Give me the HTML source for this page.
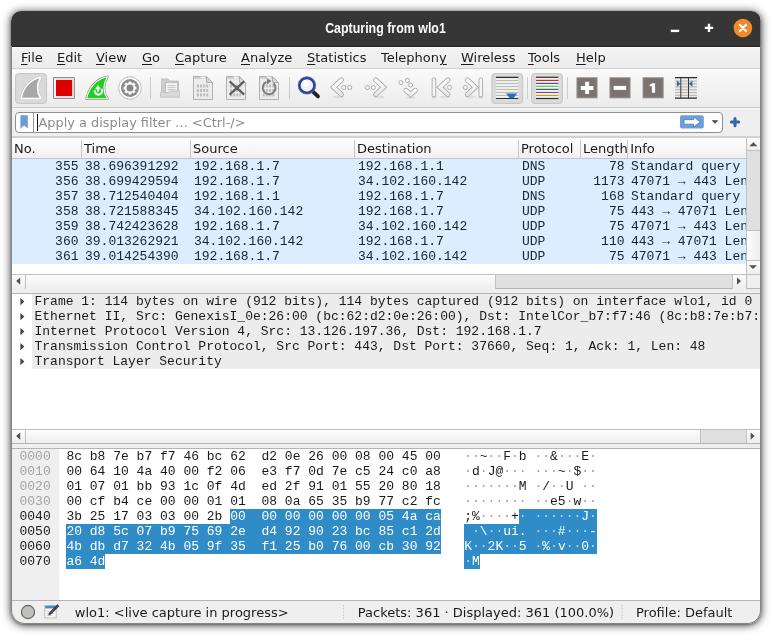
<!DOCTYPE html>
<html><head><meta charset="utf-8"><title>Capturing from wlo1</title>
<style>
*{box-sizing:border-box;margin:0;padding:0}
html,body{width:773px;height:636px;background:#fff;overflow:hidden}
body{position:relative;font-family:"DejaVu Sans","Liberation Sans",sans-serif;font-size:13px;color:#1a1a1a}
.a{position:absolute}
#shadow{position:absolute;left:11px;top:11px;width:750px;height:613px;border-radius:10px 10px 14px 14px;box-shadow:0 1px 9px 1px rgba(0,0,0,.6),0 1px 3px 0 rgba(0,0,0,.35)}
#win{position:absolute;left:11px;top:11px;width:750px;height:613px;border-radius:10px 10px 14px 14px;background:#efefef;overflow:hidden}
#edge{position:absolute;left:11px;top:46px;width:750px;height:578px;box-shadow:inset 1px 0 0 #858585,inset -1px 0 0 #858585,inset 0 -1px 0 #858585;border-radius:0 0 14px 14px;pointer-events:none}
#page{position:absolute;left:-11px;top:-11px;width:773px;height:636px;will-change:transform}
#title{position:absolute;left:11px;top:11px;width:750px;height:36px;background:#363636;border-bottom:1px solid #232323}
#title .t{position:absolute;left:0;width:749px;top:8px;height:18px;line-height:18px;text-align:center;color:#fafafa;font-family:"Liberation Sans","DejaVu Sans",sans-serif;font-weight:bold;font-size:14px;transform:scaleX(0.887);transform-origin:374.5px 0}
#menu{position:absolute;left:11px;top:47px;width:750px;height:22px;background:linear-gradient(#f3f3f3,#ececec);border-top:1px solid #fbfbfb;border-bottom:1px solid #d0d0d0}
#menu span{position:absolute;top:2px;white-space:nowrap;line-height:16px}
u{text-decoration:underline;text-underline-offset:1.5px;text-decoration-thickness:1px}
.mono{font-family:"Liberation Mono","DejaVu Sans Mono",monospace;font-size:13px;white-space:pre;line-height:15px}
.line{position:absolute;background:#d0d0d0}
.tbtn{position:absolute;background:#dadada;border:1px solid #c2c2c2;border-radius:3px}
.pane{position:absolute;background:#fff;border:1px solid #b4b4b4}
.row{position:absolute;left:12px;width:734px;overflow:hidden;height:15px;background:#daeeff;color:#12272e}
.row span{position:absolute;top:0}
.hd{position:absolute;top:139px;height:20px;line-height:20px;white-space:nowrap;color:#1a1a1a}
.sep{position:absolute;top:140px;width:1px;height:18px;background:#c8c8c8}
.sb{position:absolute;background:#e0e0e0}
.sbh{position:absolute;background:linear-gradient(#fcfcfc,#eeeeee);border:1px solid #c0c0c0}
.sbv{background:linear-gradient(90deg,#fcfcfc,#eeeeee)}
.drow{position:absolute;left:32px;width:728px;overflow:hidden;height:15px;background:#ececec;color:#1a1a1a}
.drow span{position:absolute;left:2.5px;top:0}
.hx{position:absolute;height:15px;color:#1a1a1a}
.sel{position:absolute;height:15px;background:#308cc6}
.w{color:#fff}
.hx i{font-style:normal;color:#a0a0a0}
.w i,.hx.w i{color:#b9d9ee}
.g{color:#a3a3a3}
</style></head><body>
<div id="shadow"></div>
<div id="win"><div id="page">
<div id="title"><div class="t">Capturing from wlo1</div></div>
<div class="a" style="left:760px;top:11px;width:1px;height:36px;background:#7a7a7a"></div>
<div id="menu"><span style="left:10px"><u>F</u>ile</span><span style="left:46px"><u>E</u>dit</span><span style="left:85px"><u>V</u>iew</span><span style="left:131px"><u>G</u>o</span><span style="left:164px"><u>C</u>apture</span><span style="left:230px"><u>A</u>nalyze</span><span style="left:296px"><u>S</u>tatistics</span><span style="left:370px">Telephon<u>y</u></span><span style="left:450px"><u>W</u>ireless</span><span style="left:517px"><u>T</u>ools</span><span style="left:565px"><u>H</u>elp</span></div>
<div class="a" style="left:11px;top:69px;width:750px;height:38px;background:linear-gradient(#fafafa,#ebebeb)"></div><div class="line" style="left:11px;top:107px;width:750px;height:1px;background:#c8c8c8"></div><div class="line" style="left:11px;top:108px;width:750px;height:1px;background:#f9f9f9"></div>
<div class="line" style="left:150px;top:77px;width:1px;height:22px;background:#cdcdcd"></div><div class="line" style="left:289px;top:77px;width:1px;height:22px;background:#cdcdcd"></div><div class="line" style="left:527px;top:77px;width:1px;height:22px;background:#cdcdcd"></div><div class="line" style="left:567px;top:77px;width:1px;height:22px;background:#cdcdcd"></div>

<svg class="a" style="left:0;top:0" width="773" height="636" viewBox="0 0 773 636">
<defs>
<linearGradient id="chev" x1="0" y1="0" x2="0" y2="1"><stop offset="0" stop-color="#ffffff"/><stop offset="1" stop-color="#e6e6e6"/></linearGradient>
<g id="doc"><path d="M0.5,0.5 H13.5 L19.5,6.5 V23.5 H0.5 Z" fill="#ececec" stroke="#b0b0b0"/><path d="M1,1 H7.4 a3,2.6 0 0 0 5.2,0 H13.3 V2.8 H1 Z" fill="#cbcbcb"/><path d="M7.2,0.6 a2.9,2.9 0 0 0 5.6,0 Z" fill="#f4f4f4"/><path d="M13.5,0.5 V6.5 H19.5 Z" fill="#d6d6d6" stroke="#b0b0b0" stroke-linejoin="round"/></g>
<g id="bits" fill="none" stroke="#bcbcbc" stroke-dasharray="2 1.1"><path d="M3.9,10 H16 M3.9,14.5 H16 M3.9,19 H16" stroke-width="3"/></g>
</defs>
<!-- checked button backgrounds -->
<g fill="#dadada" stroke="#c4c4c4" stroke-width="1">
<rect x="15.6" y="73.6" width="30.8" height="29.8" rx="3"/>
<rect x="491.9" y="73.6" width="30.8" height="29.8" rx="3"/>
<rect x="531.6" y="73.6" width="30.8" height="29.8" rx="3"/>
</g>
<!-- fin (disabled, checked) -->
<path d="M40.8,77.2 C30.4,79.4 23.2,87.4 21,98.6 L41,98.6 C36.6,92.4 36.4,85 40.8,77.2 Z" fill="#a8a8a8" stroke="#bdbdbd" stroke-width="2.6" stroke-linejoin="round"/>
<path d="M40.8,77.2 C30.4,79.4 23.2,87.4 21,98.6 L41,98.6 C36.6,92.4 36.4,85 40.8,77.2 Z" fill="#a8a8a8" stroke="#ffffff" stroke-width="1.6" stroke-linejoin="round"/>
<!-- stop -->
<rect x="53.5" y="77.6" width="20.8" height="20.8" fill="#f0f0f0" stroke="#848484"/>
<rect x="56" y="79.9" width="16.2" height="16.2" fill="#dd0000"/>
<!-- restart fin -->
<path d="M107.4,76.8 C96.4,79 88.8,87.4 86.6,98.8 L107.6,98.8 C103,92.4 102.8,84.6 107.4,76.8 Z" fill="#1fd01f" stroke="#8e8e8e" stroke-width="2.4" stroke-linejoin="round"/>
<path d="M107.4,76.8 C96.4,79 88.8,87.4 86.6,98.8 L107.6,98.8 C103,92.4 102.8,84.6 107.4,76.8 Z" fill="#1ecf1e" stroke="#f2fff2" stroke-width="1.1" stroke-linejoin="round"/>
<path d="M101.6,89 A3.7,3.7 0 1 1 94.8,90.2" fill="none" stroke="#fff" stroke-width="2.1"/>
<path d="M98,85 L101,89.2 L95,89.2 Z" fill="#fff"/>
<path d="M98,88 V92" stroke="#fff" stroke-width="1.7"/>
<!-- gear -->
<circle cx="130" cy="88" r="11.3" fill="#ffffff" stroke="#bcbcbc" stroke-width="1"/>
<circle cx="130" cy="88" r="9" fill="#8b8b8b"/>
<g transform="translate(130 88)" fill="#ffffff">
<circle r="5"/>
<g id="teeth"><rect x="-1.5" y="-6.5" width="3" height="13" rx="0.5"/><rect x="-6.5" y="-1.5" width="13" height="3" rx="0.5"/></g>
<use href="#teeth" transform="rotate(45)"/>
<circle r="3.5" fill="#878787"/>
</g>
<!-- open folder (disabled) -->
<path d="M161.5,79 H168 L169.5,81 H178.5 V96.5 H161.5 Z" fill="#cdcdcd" stroke="#c2c2c2"/>
<rect x="165.5" y="82.5" width="12" height="10" fill="#f2f2f2" stroke="#bdbdbd"/>
<path d="M167.5,85.5 H175.5 M167.5,87.5 H175.5 M167.5,89.5 H175.5" stroke="#c4c4c4" stroke-width="0.9"/>
<path d="M160.5,92.5 H168 L169.5,91 H179.5 V97.2 H160.5 Z" fill="#d9d9d9" stroke="#c6c6c6"/>
<!-- save doc -->
<g transform="translate(193 76)"><use href="#doc"/><use href="#bits"/></g>
<!-- close doc -->
<g transform="translate(226 76)"><use href="#doc"/><use href="#bits"/><path d="M3.6,5.4 L18.2,18.6 M18.2,5.4 L3.6,18.6" stroke="#5c5c5c" stroke-width="2.1" fill="none"/></g>
<!-- reload doc -->
<g transform="translate(259 76)"><use href="#doc"/><use href="#bits"/><path d="M7.4,6 A6.4,6.4 0 1 0 14.6,7.2" stroke="#7d7d7d" stroke-width="2" fill="none"/><path d="M7.8,2.2 L12.6,5 L8,8.6 Z" fill="#7d7d7d"/></g>
<!-- find -->
<path d="M313,91.6 L318,96.4" stroke="#222" stroke-width="3.8" stroke-linecap="round"/>
<circle cx="306.9" cy="85.4" r="7.6" fill="#eef1f6" stroke="#2c3f9e" stroke-width="2.7"/>
<circle cx="306.9" cy="85.4" r="8.7" fill="none" stroke="#5b78c8" stroke-width="0.8" opacity=".8"/>
<circle cx="305.6" cy="83.6" r="3.4" fill="#ffffff" opacity=".8"/>
<g opacity=".2" fill="#9a9a9a"><ellipse cx="338" cy="97" rx="5" ry="1.2"/><ellipse cx="379.5" cy="97" rx="5" ry="1.2"/><ellipse cx="410.6" cy="97.6" rx="5" ry="1.2"/><ellipse cx="434" cy="97.6" rx="3" ry="1.1"/><ellipse cx="445" cy="97" rx="5" ry="1.2"/><ellipse cx="471" cy="97" rx="5" ry="1.2"/><ellipse cx="480.8" cy="97.6" rx="3" ry="1.1"/></g>
<!-- back -->
<path d="M341.5,79.9 L333.6,87.2 L341.5,94.5" fill="none" stroke="#a3a3a3" stroke-width="5" stroke-linecap="round" stroke-linejoin="miter"/><path d="M341.5,79.9 L333.6,87.2 L341.5,94.5" fill="none" stroke="url(#chev)" stroke-width="3.4" stroke-linecap="round" stroke-linejoin="miter"/>
<circle cx="343.8" cy="87.5" r="2.05" fill="#fbfbfb" stroke="#a6a6a6" stroke-width="0.9"/>
<circle cx="349.7" cy="87.5" r="2.05" fill="#fbfbfb" stroke="#a6a6a6" stroke-width="0.9"/>
<!-- forward -->
<path d="M375.7,79.9 L383.6,87.2 L375.7,94.5" fill="none" stroke="#a3a3a3" stroke-width="5" stroke-linecap="round" stroke-linejoin="miter"/><path d="M375.7,79.9 L383.6,87.2 L375.7,94.5" fill="none" stroke="url(#chev)" stroke-width="3.4" stroke-linecap="round" stroke-linejoin="miter"/>
<circle cx="367.4" cy="87.5" r="2.05" fill="#fbfbfb" stroke="#a6a6a6" stroke-width="0.9"/>
<circle cx="373.3" cy="87.5" r="2.05" fill="#fbfbfb" stroke="#a6a6a6" stroke-width="0.9"/>
<!-- goto -->
<path d="M405.9,90.4 L410.6,94.6 L415.3,90.4" fill="none" stroke="#a3a3a3" stroke-width="5" stroke-linecap="round" stroke-linejoin="miter"/><path d="M405.9,90.4 L410.6,94.6 L415.3,90.4" fill="none" stroke="url(#chev)" stroke-width="3.4" stroke-linecap="round" stroke-linejoin="miter"/>
<circle cx="400.9" cy="82.6" r="2.05" fill="#fbfbfb" stroke="#a6a6a6" stroke-width="0.9"/>
<circle cx="407.5" cy="80.4" r="2.05" fill="#fbfbfb" stroke="#a6a6a6" stroke-width="0.9"/>
<circle cx="410.6" cy="85" r="2.05" fill="#fbfbfb" stroke="#a6a6a6" stroke-width="0.9"/>
<!-- first -->
<path d="M433.9,79.6 V95.2" stroke="#a3a3a3" stroke-width="4.4" stroke-linecap="round"/><path d="M433.9,79.6 V95.2" stroke="#f6f6f6" stroke-width="2.8" stroke-linecap="round"/>
<path d="M447.9,79.9 L440,87.2 L447.9,94.5" fill="none" stroke="#a3a3a3" stroke-width="5" stroke-linecap="round" stroke-linejoin="miter"/><path d="M447.9,79.9 L440,87.2 L447.9,94.5" fill="none" stroke="url(#chev)" stroke-width="3.4" stroke-linecap="round" stroke-linejoin="miter"/>
<circle cx="449.6" cy="87.5" r="2.05" fill="#fbfbfb" stroke="#a6a6a6" stroke-width="0.9"/>
<!-- last -->
<path d="M480.8,79.6 V95.2" stroke="#a3a3a3" stroke-width="4.4" stroke-linecap="round"/><path d="M480.8,79.6 V95.2" stroke="#f6f6f6" stroke-width="2.8" stroke-linecap="round"/>
<path d="M467.4,79.9 L475.3,87.2 L467.4,94.5" fill="none" stroke="#a3a3a3" stroke-width="5" stroke-linecap="round" stroke-linejoin="miter"/><path d="M467.4,79.9 L475.3,87.2 L467.4,94.5" fill="none" stroke="url(#chev)" stroke-width="3.4" stroke-linecap="round" stroke-linejoin="miter"/>
<circle cx="465.3" cy="87.5" r="2.05" fill="#fbfbfb" stroke="#a6a6a6" stroke-width="0.9"/>
<!-- autoscroll -->
<g>
<rect x="496" y="77" width="22.4" height="22" fill="#efefea"/>
<path d="M496,80.5 H518.4 M496,83.5 H518.4 M496,86.5 H518.4 M496,89.5 H518.4 M496,92.5 H518.4 M496,95.5 H518.4" stroke="#bcbcb6" stroke-width="1"/>
<path d="M496,77.3 H518.4 M496,98.5 H518.4" stroke="#2b2b2b" stroke-width="1.2"/>
<path d="M506,93.6 H517.2 L513.4,98.2 H509.8 Z" fill="#2f6cb8"/>
</g>
<!-- colorize -->
<g stroke-width="1.2">
<rect x="536" y="77" width="22.4" height="22" fill="#f4f4f0" stroke="none"/>
<path d="M536,77.3 H558.4" stroke="#2b2b2b"/>
<path d="M536,80.4 H558.4" stroke="#e02020"/>
<path d="M536,83.4 H558.4" stroke="#2a5db0"/>
<path d="M536,86.3 H558.4" stroke="#6cc820"/>
<path d="M536,89.4 H558.4" stroke="#2a5db0"/>
<path d="M536,92.5 H558.4" stroke="#74508c"/>
<path d="M536,95.5 H558.4" stroke="#c8a010"/>
<path d="M536,98.5 H558.4" stroke="#2b2b2b"/>
</g>
<!-- zoom in / out / 1:1 -->
<g>
<rect x="576.9" y="77.7" width="20.2" height="20.2" fill="#7a736f" stroke="#9d9794" stroke-width="0.9"/>
<path d="M580.8,87.9 H593.4 M587.1,81.8 V93.9" stroke="#fff" stroke-width="4"/>
<rect x="609.9" y="77.7" width="20.2" height="20.2" fill="#7a736f" stroke="#9d9794" stroke-width="0.9"/>
<path d="M613.6,87.9 H626.2" stroke="#fff" stroke-width="4"/>
<rect x="643" y="77.7" width="20.2" height="20.2" fill="#7a736f" stroke="#9d9794" stroke-width="0.9"/>
<path d="M649.8,86.4 V84.6 L652.2,83.3 H655.1 V92.8 H651.9 V86 Z" fill="#fff"/>
</g>
<!-- resize columns -->
<g>
<rect x="675" y="77.5" width="22" height="21" fill="#ecece6"/>
<path d="M675,81.1 H697 M675,83.9 H697 M675,86.9 H697 M675,89.7 H697 M675,92.5 H697 M675,95.3 H697" stroke="#b6b6ae" stroke-width="1"/>
<path d="M675,77.6 H697 M675,98.2 H697" stroke="#2b2b2b" stroke-width="1.2"/>
<path d="M680.8,77.5 V98.5 M688.5,77.5 V98.5" stroke="#3a3a3a" stroke-width="1"/>
<path d="M676.9,80.6 L680.4,83.8 L676.9,87 Z M692.4,80.6 L688.9,83.8 L692.4,87 Z" fill="#2f6cb8"/>
</g>
</svg>

<div class="a" style="left:15px;top:112px;width:708px;height:21px;background:#fff;border:1px solid #8f8f8f;border-radius:4px"></div><div class="a" style="left:33px;top:113px;width:1px;height:19px;background:#9a9a9a"></div><div class="a" style="left:37px;top:114px;width:1px;height:17px;background:#111"></div><div class="a" style="left:38.5px;top:112px;height:21px;line-height:21px;color:#8c8c8c;white-space:nowrap;font-size:12.9px">Apply a display filter … &lt;Ctrl-/&gt;</div>
<svg class="a" style="left:0;top:0" width="773" height="636" viewBox="0 0 773 636">
<path d="M20.4,115.2 H27.8 V128.6 L24.1,125.4 L20.4,128.6 Z" fill="#6c9bd2"/>
<rect x="680" y="115.2" width="23.8" height="13.4" rx="2" fill="#6f9fd8"/>
<path d="M684,119.6 H693.6 V116.8 L700.4,121.9 L693.6,127 V124.2 H684 Z" fill="#fff" stroke="#4a7fc0" stroke-width="0.9" stroke-linejoin="round"/>
<path d="M711.6,120.2 H718.4 L715,123.8 Z" fill="#4a4a4a"/>
<path d="M735,118.4 V125.8 M731.3,122.1 H738.7" stroke="#3465a4" stroke-width="3" stroke-linecap="round"/>
</svg>

<div class="pane" style="left:11px;top:136px;width:749px;height:153px;border-left:0;border-right:0;border-top:2px solid #d2d2d2"></div><div class="a" style="left:12px;top:138px;width:735px;height:21px;background:linear-gradient(#ffffff,#f0f0f0);border-bottom:1px solid #c4c4c4"></div><div class="hd" style="left:14px">No.</div><div class="hd" style="left:84px">Time</div><div class="hd" style="left:193px">Source</div><div class="hd" style="left:357px">Destination</div><div class="hd" style="left:521px">Protocol</div><div class="hd" style="left:583px">Length</div><div class="hd" style="left:630.2px">Info</div><div class="sep" style="left:81px"></div><div class="sep" style="left:190px"></div><div class="sep" style="left:354px"></div><div class="sep" style="left:518px"></div><div class="sep" style="left:580px"></div><div class="sep" style="left:627px"></div>
<div class="row mono" style="top:159px"><span style="right:667.5px">355</span><span style="left:73px">38.696391292</span><span style="left:182px">192.168.1.7</span><span style="left:346px">192.168.1.1</span><span style="left:510px">DNS</span><span style="right:121.5px">78</span><span style="left:619px">Standard query 0x</span></div>
<div class="row mono" style="top:174px"><span style="right:667.5px">356</span><span style="left:73px">38.699429594</span><span style="left:182px">192.168.1.7</span><span style="left:346px">34.102.160.142</span><span style="left:510px">UDP</span><span style="right:121.5px">1173</span><span style="left:619px">47071 → 443 Len=</span></div>
<div class="row mono" style="top:189px"><span style="right:667.5px">357</span><span style="left:73px">38.712540404</span><span style="left:182px">192.168.1.1</span><span style="left:346px">192.168.1.7</span><span style="left:510px">DNS</span><span style="right:121.5px">168</span><span style="left:619px">Standard query re</span></div>
<div class="row mono" style="top:204px"><span style="right:667.5px">358</span><span style="left:73px">38.721588345</span><span style="left:182px">34.102.160.142</span><span style="left:346px">192.168.1.7</span><span style="left:510px">UDP</span><span style="right:121.5px">75</span><span style="left:619px">443 → 47071 Len=</span></div>
<div class="row mono" style="top:219px"><span style="right:667.5px">359</span><span style="left:73px">38.742423628</span><span style="left:182px">192.168.1.7</span><span style="left:346px">34.102.160.142</span><span style="left:510px">UDP</span><span style="right:121.5px">75</span><span style="left:619px">47071 → 443 Len=</span></div>
<div class="row mono" style="top:234px"><span style="right:667.5px">360</span><span style="left:73px">39.013262921</span><span style="left:182px">34.102.160.142</span><span style="left:346px">192.168.1.7</span><span style="left:510px">UDP</span><span style="right:121.5px">110</span><span style="left:619px">443 → 47071 Len=</span></div>
<div class="row mono" style="top:249px"><span style="right:667.5px">361</span><span style="left:73px">39.014254390</span><span style="left:182px">192.168.1.7</span><span style="left:346px">34.102.160.142</span><span style="left:510px">UDP</span><span style="right:121.5px">75</span><span style="left:619px">47071 → 443 Len=</span></div>
<div class="sb" style="left:746px;top:138px;width:14px;height:137px;border-left:1px solid #c2c2c2"></div><div class="sbh" style="left:746px;top:138px;width:14px;height:13px;border-right:0;border-top:0"></div><div class="sbh sbv" style="left:746px;top:230px;width:14px;height:31px;border-right:0"></div><div class="sbh" style="left:746px;top:260px;width:14px;height:15px;border-right:0"></div><div class="sb" style="left:12px;top:274px;width:735px;height:14px;border-top:1px solid #c2c2c2"></div><div class="sbh" style="left:11px;top:274px;width:15px;height:15px;border-bottom:0"></div><div class="sbh" style="left:25px;top:274px;width:471px;height:15px;border-bottom:0"></div><div class="sbh" style="left:732px;top:274px;width:15px;height:15px;border-bottom:0"></div><div class="a" style="left:747px;top:275px;width:13px;height:13px;background:#efefef"></div>
<div class="pane" style="left:11px;top:293px;width:749px;height:151px;border-left:0;border-right:0"></div><div class="drow mono" style="top:294px"><span>Frame 1: 114 bytes on wire (912 bits), 114 bytes captured (912 bits) on interface wlo1, id 0</span></div>
<div class="drow mono" style="top:309px"><span>Ethernet II, Src: GenexisI_0e:26:00 (bc:62:d2:0e:26:00), Dst: IntelCor_b7:f7:46 (8c:b8:7e:b7:f7:46)</span></div>
<div class="drow mono" style="top:324px"><span>Internet Protocol Version 4, Src: 13.126.197.36, Dst: 192.168.1.7</span></div>
<div class="drow mono" style="top:339px"><span>Transmission Control Protocol, Src Port: 443, Dst Port: 37660, Seq: 1, Ack: 1, Len: 48</span></div>
<div class="drow mono" style="top:354px"><span>Transport Layer Security</span></div>
<div class="sb" style="left:12px;top:429px;width:748px;height:14px;border-top:1px solid #c0c0c0"></div><div class="sbh" style="left:11px;top:429px;width:15px;height:14px;border-bottom:0"></div><div class="sbh" style="left:25px;top:429px;width:676px;height:14px;border-bottom:0"></div><div class="sbh" style="left:746px;top:429px;width:15px;height:14px;border-bottom:0"></div>
<div class="pane" style="left:11px;top:448px;width:749px;height:153px;border-left:0;border-right:0"></div><div class="a" style="left:12px;top:449px;width:47px;height:151px;background:#efefef"></div>
<div class="sel" style="left:230.2px;top:509px;width:210.6px"></div><div class="sel" style="left:518.8px;top:509px;width:78.0px"></div><div class="sel" style="left:66.4px;top:524px;width:374.4px"></div><div class="sel" style="left:464.2px;top:524px;width:132.6px"></div><div class="sel" style="left:66.4px;top:539px;width:374.4px"></div><div class="sel" style="left:464.2px;top:539px;width:132.6px"></div><div class="sel" style="left:66.4px;top:554px;width:39.0px"></div><div class="sel" style="left:464.2px;top:554px;width:15.6px"></div>
<div class="hx mono g" style="left:19.5px;top:449px">0000</div><div class="hx mono" style="left:66.4px;top:449px">8c b8 7e b7 f7 46 bc 62  d2 0e 26 00 08 00 45 00</div><div class="hx mono" style="left:464.2px;top:449px"><i>··</i>~<i>··</i>F<i>·</i>b <i>··</i>&amp;<i>···</i>E<i>·</i></div>
<div class="hx mono g" style="left:19.5px;top:464px">0010</div><div class="hx mono" style="left:66.4px;top:464px">00 64 10 4a 40 00 f2 06  e3 f7 0d 7e c5 24 c0 a8</div><div class="hx mono" style="left:464.2px;top:464px"><i>·</i>d<i>·</i>J@<i>···</i> <i>···</i>~<i>·</i>$<i>··</i></div>
<div class="hx mono g" style="left:19.5px;top:479px">0020</div><div class="hx mono" style="left:66.4px;top:479px">01 07 01 bb 93 1c 0f 4d  ed 2f 91 01 55 20 80 18</div><div class="hx mono" style="left:464.2px;top:479px"><i>·······</i>M <i>·</i>/<i>··</i>U <i>··</i></div>
<div class="hx mono g" style="left:19.5px;top:494px">0030</div><div class="hx mono" style="left:66.4px;top:494px">00 cf b4 ce 00 00 01 01  08 0a 65 35 b9 77 c2 fc</div><div class="hx mono" style="left:464.2px;top:494px"><i>········</i> <i>··</i>e5<i>·</i>w<i>··</i></div>
<div class="hx mono " style="left:19.5px;top:509px">0040</div><div class="hx mono" style="left:66.4px;top:509px">3b 25 17 03 03 00 2b <span class="w">00  00 00 00 00 00 05 4a ca</span></div><div class="hx mono" style="left:464.2px;top:509px">;%<i>····</i>+<span class="w"><i>·</i> <i>······</i>J<i>·</i></span></div>
<div class="hx mono " style="left:19.5px;top:524px">0050</div><div class="hx mono w" style="left:66.4px;top:524px">20 d8 5c 07 b9 75 69 2e  d4 92 90 23 bc 85 c1 2d</div><div class="hx mono w" style="left:464.2px;top:524px"> <i>·</i>\<i>··</i>ui. <i>···</i>#<i>···</i>-</div>
<div class="hx mono " style="left:19.5px;top:539px">0060</div><div class="hx mono w" style="left:66.4px;top:539px">4b db d7 32 4b 05 9f 35  f1 25 b0 76 00 cb 30 92</div><div class="hx mono w" style="left:464.2px;top:539px">K<i>··</i>2K<i>··</i>5 <i>·</i>%<i>·</i>v<i>··</i>0<i>·</i></div>
<div class="hx mono " style="left:19.5px;top:554px">0070</div><div class="hx mono w" style="left:66.4px;top:554px">a6 4d</div><div class="hx mono w" style="left:464.2px;top:554px"><i>·</i>M</div>
<div class="a" style="left:11px;top:601px;width:750px;height:23px;background:#efefef"></div><div class="a" style="left:74.8px;top:602px;height:22px;line-height:22px;white-space:nowrap">wlo1: &lt;live capture in progress&gt;</div><div class="a" style="left:357.8px;top:602px;height:22px;line-height:22px;white-space:nowrap">Packets: 361 · Displayed: 361 (100.0%)</div><div class="a" style="left:636px;top:602px;height:22px;line-height:22px;white-space:nowrap">Profile: Default</div>
<svg class="a" style="left:0;top:0" width="773" height="636" viewBox="0 0 773 636">
<circle cx="28" cy="612" r="6.6" fill="#bec0bc" stroke="#5f6360" stroke-width="1.1"/>
<rect x="44.8" y="605.6" width="11.4" height="12.4" fill="#f6f6f6" stroke="#b8b8b8" stroke-width="0.9"/>
<rect x="45.2" y="605.8" width="10.6" height="2.6" fill="#3c8ad6"/>
<path d="M47,611.5 H54 M47,613.5 H54 M47,615.5 H52" stroke="#c9c9c9" stroke-width="0.8"/>
<path d="M57.4,604.6 L49.6,612.4 L48.6,615 L51.2,614 L59,606.2 Z" fill="#4a4a4a" stroke="#2b2b2b" stroke-width="0.6"/>
<path d="M343.5,605.5 V619.5 M622,605.5 V619.5" stroke="#b5b5b5" stroke-width="1" stroke-dasharray="1 2"/>
</svg>

<svg class="a" style="left:0;top:0" width="773" height="636" viewBox="0 0 773 636">
<!-- title buttons -->
<path d="M670.8,30.9 H679.2" stroke="#fff" stroke-width="2.4"/>
<path d="M704.8,27.9 H713.2 M709,23.7 V32.1" stroke="#fff" stroke-width="2.4"/>
<circle cx="742.9" cy="28" r="9.3" fill="#f08a2a"/>
<path d="M739.9,25 L745.9,31 M745.9,25 L739.9,31" stroke="#fff" stroke-width="2.2" stroke-linecap="round"/>
<!-- scroll arrows -->
<g fill="#505050">
<path d="M749.4,146.2 L753.4,142.3 L757.4,146.2 Z"/>
<path d="M749,265.2 L753,269 L757,265.2 Z"/>
<path d="M20.2,277.4 L16.2,281.1 L20.2,284.8 Z"/>
<path d="M737,277.4 L741,281.1 L737,284.8 Z"/>
<path d="M20.2,432.4 L16.2,436.1 L20.2,439.8 Z"/>
<path d="M750.6,432.4 L754.6,436.1 L750.6,439.8 Z"/>
</g>
<!-- tree arrows -->
<g fill="#454545">
<path d="M20.4,298 L24.4,301.6 L20.4,305.2 Z"/>
<path d="M20.4,313 L24.4,316.6 L20.4,320.2 Z"/>
<path d="M20.4,328 L24.4,331.6 L20.4,335.2 Z"/>
<path d="M20.4,343 L24.4,346.6 L20.4,350.2 Z"/>
<path d="M20.4,358 L24.4,361.6 L20.4,365.2 Z"/>
</g>
<!-- splitter grips -->
<path d="M745,290.5 H758 M745,445.5 H758" stroke="#d0d0d0" stroke-width="1" stroke-dasharray="1 1" opacity=".4"/>
</svg>

</div></div>
<div id="edge"></div>
</body></html>
